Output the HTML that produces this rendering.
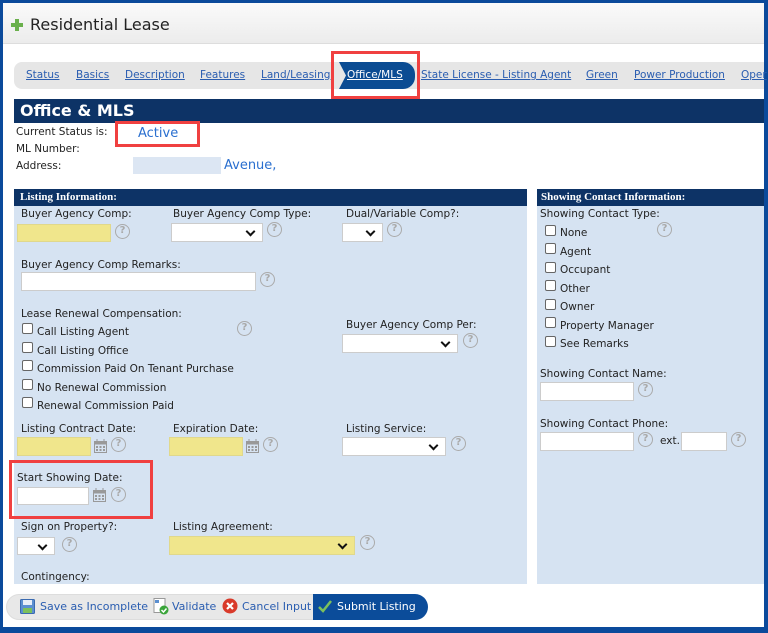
<!DOCTYPE html>
<html><head><meta charset="utf-8">
<style>
*{margin:0;padding:0;box-sizing:border-box}
body{width:768px;height:633px;background:#0b4a9b;position:relative;overflow:hidden;font-family:"DejaVu Sans","Liberation Sans",sans-serif;font-size:10.5px;color:#222}
.a{position:absolute}
.page{left:3px;top:3px;width:761px;height:624px;background:#fff}
.hdr{left:3px;top:3px;width:761px;height:41px;background:linear-gradient(#fafafa,#ececec);border-bottom:1px solid #ddd}
.lbl{position:absolute;font-size:10.5px;color:#222;white-space:nowrap}
.in{position:absolute;background:#fff;border:1px solid #ccc}
.y{background:#f0e68c;border-color:#e0d88c}
.sel::after{content:"";position:absolute;right:8px;top:4px;width:5px;height:5px;border-right:2px solid #111;border-bottom:2px solid #111;transform:rotate(45deg)}
.q{position:absolute;width:15px;height:15px;border:1.5px solid #aaa;border-radius:50%;color:#aaa;font-size:10px;line-height:12px;text-align:center;font-weight:bold}
.cb{position:absolute;width:11px;height:11px;border:1px solid #666;border-radius:2px;background:#fff}
.tab{position:absolute;top:69px;color:#2a5db0;text-decoration:underline;font-size:10.5px;white-space:nowrap}
.red{position:absolute;border:3px solid #f04040}
.cal{position:absolute;width:13px;height:14px}
</style></head><body>
<div class="a page"></div>
<div class="a hdr"></div>
<svg class="a" style="left:11px;top:19px" width="12" height="12"><path d="M4 0h4v4h4v4h-4v4h-4v-4h-4v-4h4z" fill="#6ab04c"/></svg>
<div class="a" style="left:30px;top:15px;font-size:16px;color:#222">Residential Lease</div>

<div class="a" style="left:14px;top:62px;width:750px;height:27px;background:#e6e6e6;border-radius:8px 0 0 8px"></div>
<div class="a" style="left:339px;top:62px;width:76px;height:27px;background:#0b4c93;border-radius:0 12px 12px 0;clip-path:polygon(0 0,100% 0,100% 100%,0 100%,7px 50%)"></div>
<span class="tab" style="left:26px">Status</span>
<span class="tab" style="left:76px">Basics</span>
<span class="tab" style="left:125px">Description</span>
<span class="tab" style="left:200px">Features</span>
<span class="tab" style="left:261px">Land/Leasing</span>
<span class="tab" style="left:347px;color:#fff">Office/MLS</span>
<span class="tab" style="left:421px">State License - Listing Agent</span>
<span class="tab" style="left:586px">Green</span>
<span class="tab" style="left:634px">Power Production</span>
<span class="tab" style="left:741px">Oper</span>
<div class="red" style="left:331px;top:51px;width:89px;height:48px"></div>

<div class="a" style="left:14px;top:99px;width:750px;height:24px;background:#0d3366"></div>
<div class="a" style="left:20px;top:101px;font-size:16px;font-weight:bold;color:#fff">Office &amp; MLS</div>
<div class="lbl" style="left:16px;top:126px">Current Status is:</div>
<div class="a" style="left:138px;top:126px;font-size:13px;color:#2a6fcf">Active</div>
<div class="red" style="left:115px;top:121px;width:85px;height:26px"></div>
<div class="lbl" style="left:16px;top:143px">ML Number:</div>
<div class="lbl" style="left:16px;top:160px">Address:</div>
<div class="a" style="left:133px;top:157px;width:88px;height:17px;background:#dce6f3"></div>
<div class="a" style="left:224px;top:158px;font-size:13px;color:#2a6fcf">Avenue,</div>

<div class="a" style="left:14px;top:189px;width:513px;height:395px;background:#d6e3f2"></div>
<div class="a" style="left:14px;top:189px;width:513px;height:17px;background:#0d3366;color:#fff;font-weight:bold;padding:2px 0 0 6px;font-family:'Liberation Serif',serif;font-size:11px">Listing Information:</div>
<div class="a" style="left:537px;top:189px;width:227px;height:395px;background:#d6e3f2"></div>
<div class="a" style="left:537px;top:189px;width:227px;height:17px;background:#0d3366;color:#fff;font-weight:bold;padding:2px 0 0 4px;font-family:'Liberation Serif',serif;font-size:11px">Showing Contact Information:</div>

<div class="lbl" style="left:21px;top:208px">Buyer Agency Comp:</div>
<div class="in y" style="left:17px;top:224px;width:94px;height:18px"></div>
<div class="q" style="left:115px;top:224px">?</div>
<div class="lbl" style="left:173px;top:208px">Buyer Agency Comp Type:</div>
<div class="in sel" style="left:171px;top:223px;width:92px;height:19px"></div>
<div class="q" style="left:267px;top:222px">?</div>
<div class="lbl" style="left:346px;top:208px">Dual/Variable Comp?:</div>
<div class="in sel" style="left:342px;top:223px;width:41px;height:19px"></div>
<div class="q" style="left:387px;top:222px">?</div>

<div class="lbl" style="left:21px;top:259px">Buyer Agency Comp Remarks:</div>
<div class="in" style="left:21px;top:272px;width:235px;height:19px"></div>
<div class="q" style="left:260px;top:272px">?</div>

<div class="lbl" style="left:21px;top:308px">Lease Renewal Compensation:</div>
<div class="q" style="left:237px;top:321px">?</div>
<div class="cb" style="left:22px;top:323px"></div><div class="lbl" style="left:37px;top:326px">Call Listing Agent</div>
<div class="cb" style="left:22px;top:342px"></div><div class="lbl" style="left:37px;top:345px">Call Listing Office</div>
<div class="cb" style="left:22px;top:360px"></div><div class="lbl" style="left:37px;top:363px">Commission Paid On Tenant Purchase</div>
<div class="cb" style="left:22px;top:379px"></div><div class="lbl" style="left:37px;top:382px">No Renewal Commission</div>
<div class="cb" style="left:22px;top:397px"></div><div class="lbl" style="left:37px;top:400px">Renewal Commission Paid</div>
<div class="lbl" style="left:346px;top:319px">Buyer Agency Comp Per:</div>
<div class="in sel" style="left:342px;top:334px;width:116px;height:19px"></div>
<div class="q" style="left:463px;top:333px">?</div>

<div class="lbl" style="left:21px;top:423px">Listing Contract Date:</div>
<div class="in y" style="left:17px;top:437px;width:74px;height:19px"></div>
<svg class="cal" style="left:94px;top:439px" viewBox="0 0 13 14"><rect x="0.5" y="2.5" width="12" height="11" fill="none" stroke="#999"/><rect x="0.5" y="2.5" width="12" height="3" fill="#999"/><path d="M3 0v3M10 0v3" stroke="#999"/><g fill="#999"><rect x="2" y="7" width="2" height="2"/><rect x="5.5" y="7" width="2" height="2"/><rect x="9" y="7" width="2" height="2"/><rect x="2" y="10" width="2" height="2"/><rect x="5.5" y="10" width="2" height="2"/><rect x="9" y="10" width="2" height="2"/></g></svg>
<div class="q" style="left:111px;top:437px">?</div>
<div class="lbl" style="left:173px;top:423px">Expiration Date:</div>
<div class="in y" style="left:169px;top:437px;width:74px;height:19px"></div>
<svg class="cal" style="left:246px;top:439px" viewBox="0 0 13 14"><rect x="0.5" y="2.5" width="12" height="11" fill="none" stroke="#999"/><rect x="0.5" y="2.5" width="12" height="3" fill="#999"/><path d="M3 0v3M10 0v3" stroke="#999"/><g fill="#999"><rect x="2" y="7" width="2" height="2"/><rect x="5.5" y="7" width="2" height="2"/><rect x="9" y="7" width="2" height="2"/><rect x="2" y="10" width="2" height="2"/><rect x="5.5" y="10" width="2" height="2"/><rect x="9" y="10" width="2" height="2"/></g></svg>
<div class="q" style="left:263px;top:437px">?</div>
<div class="lbl" style="left:346px;top:423px">Listing Service:</div>
<div class="in sel" style="left:342px;top:437px;width:104px;height:19px"></div>
<div class="q" style="left:451px;top:436px">?</div>

<div class="lbl" style="left:17px;top:472px">Start Showing Date:</div>
<div class="in" style="left:17px;top:487px;width:72px;height:18px"></div>
<svg class="cal" style="left:93px;top:488px" viewBox="0 0 13 14"><rect x="0.5" y="2.5" width="12" height="11" fill="none" stroke="#999"/><rect x="0.5" y="2.5" width="12" height="3" fill="#999"/><path d="M3 0v3M10 0v3" stroke="#999"/><g fill="#999"><rect x="2" y="7" width="2" height="2"/><rect x="5.5" y="7" width="2" height="2"/><rect x="9" y="7" width="2" height="2"/><rect x="2" y="10" width="2" height="2"/><rect x="5.5" y="10" width="2" height="2"/><rect x="9" y="10" width="2" height="2"/></g></svg>
<div class="q" style="left:111px;top:487px">?</div>
<div class="red" style="left:9px;top:460px;width:144px;height:59px"></div>

<div class="lbl" style="left:21px;top:521px">Sign on Property?:</div>
<div class="in sel" style="left:17px;top:537px;width:38px;height:18px"></div>
<div class="q" style="left:62px;top:537px">?</div>
<div class="lbl" style="left:173px;top:521px">Listing Agreement:</div>
<div class="in y sel" style="left:169px;top:536px;width:186px;height:19px"></div>
<div class="q" style="left:360px;top:535px">?</div>
<div class="lbl" style="left:21px;top:571px">Contingency:</div>

<div class="lbl" style="left:540px;top:208px">Showing Contact Type:</div>
<div class="q" style="left:657px;top:222px">?</div>
<div class="cb" style="left:545px;top:225px"></div><div class="lbl" style="left:560px;top:227px">None</div>
<div class="cb" style="left:545px;top:243px"></div><div class="lbl" style="left:560px;top:246px">Agent</div>
<div class="cb" style="left:545px;top:262px"></div><div class="lbl" style="left:560px;top:264px">Occupant</div>
<div class="cb" style="left:545px;top:280px"></div><div class="lbl" style="left:560px;top:283px">Other</div>
<div class="cb" style="left:545px;top:299px"></div><div class="lbl" style="left:560px;top:301px">Owner</div>
<div class="cb" style="left:545px;top:317px"></div><div class="lbl" style="left:560px;top:320px">Property Manager</div>
<div class="cb" style="left:545px;top:336px"></div><div class="lbl" style="left:560px;top:338px">See Remarks</div>
<div class="lbl" style="left:540px;top:368px">Showing Contact Name:</div>
<div class="in" style="left:540px;top:382px;width:94px;height:19px"></div>
<div class="q" style="left:638px;top:382px">?</div>
<div class="lbl" style="left:540px;top:418px">Showing Contact Phone:</div>
<div class="in" style="left:540px;top:432px;width:94px;height:19px"></div>
<div class="q" style="left:638px;top:432px">?</div>
<div class="lbl" style="left:660px;top:435px">ext.</div>
<div class="in" style="left:681px;top:432px;width:46px;height:19px"></div>
<div class="q" style="left:731px;top:432px">?</div>

<div class="a" style="left:6px;top:594px;width:420px;height:26px;background:#e8e8e8;border-radius:13px;border:1px solid #ddd"></div>
<div class="a" style="left:313px;top:594px;width:115px;height:26px;background:#0b4c9a;border-radius:0 13px 13px 0"></div>
<svg class="a" style="left:20px;top:599px" width="15" height="15"><rect x="0.5" y="0.5" width="14" height="14" rx="1" fill="#5b8fd0" stroke="#3a6ab0"/><rect x="3" y="1" width="9" height="5" fill="#e8eef8"/><rect x="3" y="9" width="9" height="5" fill="#7cc05c"/></svg>
<div class="a" style="left:40px;top:600px;font-size:11px;color:#2a5db0">Save as Incomplete</div>
<svg class="a" style="left:153px;top:598px" width="16" height="17"><rect x="1" y="0.5" width="11" height="14" fill="#fff" stroke="#999"/><rect x="2" y="2" width="4" height="3" fill="#5b8fd0"/><circle cx="11" cy="12" r="4.5" fill="#3aa53a"/><path d="M8.5 12l2 2 3-3.5" stroke="#fff" stroke-width="1.5" fill="none"/></svg>
<div class="a" style="left:172px;top:600px;font-size:11px;color:#2a5db0">Validate</div>
<svg class="a" style="left:222px;top:598px" width="16" height="16"><circle cx="8" cy="8" r="7.5" fill="#d93a2a"/><path d="M5 5l6 6M11 5l-6 6" stroke="#fff" stroke-width="2.2"/></svg>
<div class="a" style="left:242px;top:600px;font-size:11px;color:#2a5db0">Cancel Input</div>
<svg class="a" style="left:318px;top:600px" width="14" height="13"><path d="M1 7l4 4 8-10" stroke="#7cc05c" stroke-width="2.5" fill="none"/></svg>
<div class="a" style="left:337px;top:600px;font-size:11px;color:#fff">Submit Listing</div>
</body></html>
